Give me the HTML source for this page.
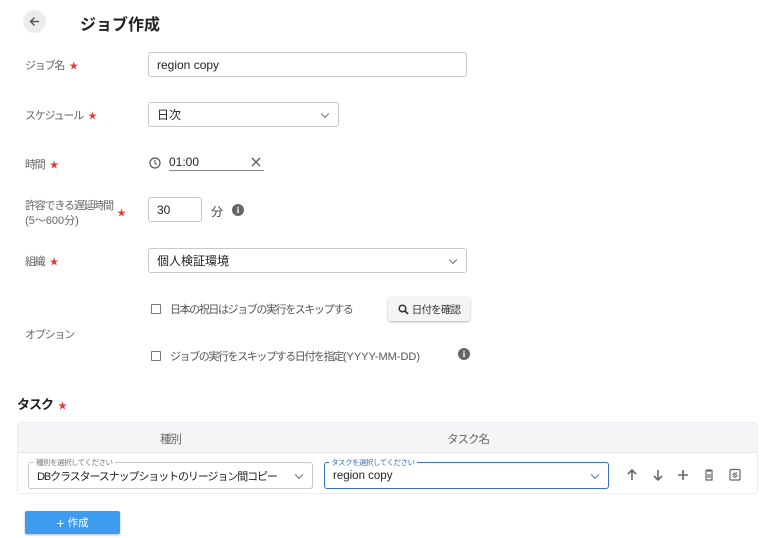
<!DOCTYPE html>
<html><head><meta charset="utf-8"><style>
*{box-sizing:border-box;margin:0;padding:0}
body{width:768px;height:538px;background:#fff;font-family:"Liberation Sans","Noto Sans CJK JP",sans-serif;position:relative;overflow:hidden;color:#333}
.a{position:absolute}
.lbl{position:absolute;left:25px;font-size:11px;letter-spacing:-1.2px;color:#666;line-height:14px;white-space:nowrap}
.st{color:#e53935;font-size:9px;letter-spacing:0;margin-left:5px}
.box{position:absolute;border:1px solid #c8c8c8;border-radius:3px;background:#fff;font-size:12px;color:#222;padding-left:8px;display:flex;align-items:center;white-space:nowrap}
.chev{position:absolute;right:10px;top:50%;width:6px;height:6px;border-right:1.3px solid #666;border-bottom:1.3px solid #666;transform:translateY(-70%) rotate(45deg)}
.cb{position:absolute;width:10px;height:10px;border:1.3px solid #777;border-radius:1px}
.info{position:absolute;width:12px;height:12px;border-radius:50%;background:#666;color:#fff;font-size:9px;font-weight:bold;text-align:center;line-height:12px;font-family:"Liberation Serif",serif}
.opt{position:absolute;font-size:11px;letter-spacing:-1.4px;color:#555;white-space:nowrap}
.opt span{letter-spacing:0}
</style></head><body>
<div class="a" style="left:23px;top:10px;width:23px;height:23px;border-radius:50%;background:#ececec"></div>
<svg class="a" style="left:28px;top:15px" width="13" height="13" viewBox="0 0 13 13"><path d="M11 6.5H2.5M6.5 2.5L2.5 6.5L6.5 10.5" stroke="#555" stroke-width="1.4" fill="none"/></svg>
<div class="a" style="left:80px;top:11px;font-size:16px;font-weight:bold;color:#222">ジョブ作成</div>

<div class="lbl" style="top:59px">ジョブ名<span class="st">★</span></div>
<div class="box" style="left:148px;top:52px;width:319px;height:25px">region copy</div>

<div class="lbl" style="top:109px">スケジュール<span class="st">★</span></div>
<div class="box" style="left:148px;top:102px;width:191px;height:25px">日次<span class="chev"></span></div>

<div class="lbl" style="top:158px">時間<span class="st">★</span></div>
<svg class="a" style="left:149px;top:157px" width="12" height="12" viewBox="0 0 12 12"><circle cx="6" cy="6" r="5" stroke="#555" stroke-width="1.2" fill="none"/><path d="M6 3V6L8 7.5" stroke="#555" stroke-width="1.1" fill="none"/></svg>
<div class="a" style="left:169px;top:155px;font-size:12px;color:#222">01:00</div>
<div class="a" style="left:169px;top:170px;width:95px;height:1px;background:#888"></div>
<svg class="a" style="left:251px;top:157px" width="10" height="10" viewBox="0 0 10 10"><path d="M1 1L9 9M9 1L1 9" stroke="#555" stroke-width="1.3"/></svg>

<div class="lbl" style="top:199px">許容できる遅延時間</div>
<div class="lbl" style="top:214px;letter-spacing:0">(5～600分)</div>
<div class="a st" style="left:112px;top:206px">★</div>
<div class="box" style="left:148px;top:197px;width:54px;height:25px">30</div>
<div class="a" style="left:211px;top:203px;font-size:12px;color:#444">分</div>
<div class="info" style="left:232px;top:204px">i</div>

<div class="lbl" style="top:255px">組織<span class="st">★</span></div>
<div class="box" style="left:148px;top:248px;width:319px;height:25px">個人検証環境<span class="chev"></span></div>

<div class="cb" style="left:151px;top:304px"></div>
<div class="opt" style="left:170px;top:301px">日本の祝日はジョブの実行をスキップする</div>
<div class="a" style="left:388px;top:297px;width:82px;height:24px;background:#f5f5f5;border-radius:3px;box-shadow:0 1px 2px rgba(0,0,0,.3);font-size:10.5px;letter-spacing:-0.8px;color:#333;display:flex;align-items:center;justify-content:center;gap:3px"><svg width="11" height="11" viewBox="0 0 11 11"><circle cx="4.5" cy="4.5" r="3.3" stroke="#333" stroke-width="1.5" fill="none"/><path d="M7 7L10 10" stroke="#333" stroke-width="1.7"/></svg>日付を確認</div>
<div class="lbl" style="top:328px">オプション</div>
<div class="cb" style="left:151px;top:351px"></div>
<div class="opt" style="left:170px;top:348px">ジョブの実行をスキップする日付を指定<span>(YYYY-MM-DD)</span></div>
<div class="info" style="left:458px;top:348px">i</div>

<div class="a" style="left:17px;top:394px;font-size:13px;font-weight:bold;color:#222;letter-spacing:-1px">タスク<span class="st">★</span></div>
<div class="a" style="left:17px;top:422px;width:741px;height:72px;border:1px solid #eceef1;border-radius:3px"></div>
<div class="a" style="left:18px;top:423px;width:739px;height:30px;background:#f4f5f7;border-bottom:1px solid #e3e5e8"></div>
<div class="a" style="left:160px;top:431px;font-size:11.5px;color:#666;letter-spacing:-1px">種別</div>
<div class="a" style="left:447px;top:431px;font-size:11.5px;color:#666;letter-spacing:-1px">タスク名</div>

<div class="box" style="left:28px;top:462px;width:285px;height:27px;font-size:11px;letter-spacing:-1.1px">DBクラスタースナップショットのリージョン間コピー<span class="chev"></span></div>
<div class="a" style="left:34px;top:457px;font-size:7.5px;color:#777;background:#fff;padding:0 2px;letter-spacing:-0.5px">種別を選択してください</div>
<div class="box" style="left:324px;top:462px;width:285px;height:27px;border:1.5px solid #3b6fc4;font-size:11.5px">region copy<span class="chev" style="border-color:#3b6fc4"></span></div>
<div class="a" style="left:329px;top:457px;font-size:7.5px;color:#3b6fc4;background:#fff;padding:0 2px;letter-spacing:-0.5px">タスクを選択してください</div>

<svg class="a" style="left:626px;top:468px" width="120" height="14" viewBox="0 0 120 14">
<g stroke="#666" stroke-width="1.6" fill="none">
<path d="M6 12V2M2 6L6 2L10 6"/>
<path d="M32 2V12M28 8L32 12L36 8"/>
<path d="M57 2V12M52 7H62"/>
<path d="M79 3H87M81 3V2H85V3M80 4V12H86V4M82 6V10M84 6V10" stroke-width="1.2"/>
<rect x="104" y="1.5" width="10" height="10.5" rx="1" stroke-width="1.2"/>
<path d="M107 9L111 4.5M106.5 7L109 4.5M108.5 10L111.5 7" stroke-width="1.1"/>
</g></svg>

<div class="a" style="left:25px;top:511px;width:95px;height:23px;background:#3d9cf0;border-radius:2px;box-shadow:0 1px 2px rgba(0,0,0,.3);color:#fff;font-size:10.5px;display:flex;align-items:center;justify-content:center"><span style="font-size:14px;margin-right:3px;line-height:1">+</span>作成</div>
</body></html>
